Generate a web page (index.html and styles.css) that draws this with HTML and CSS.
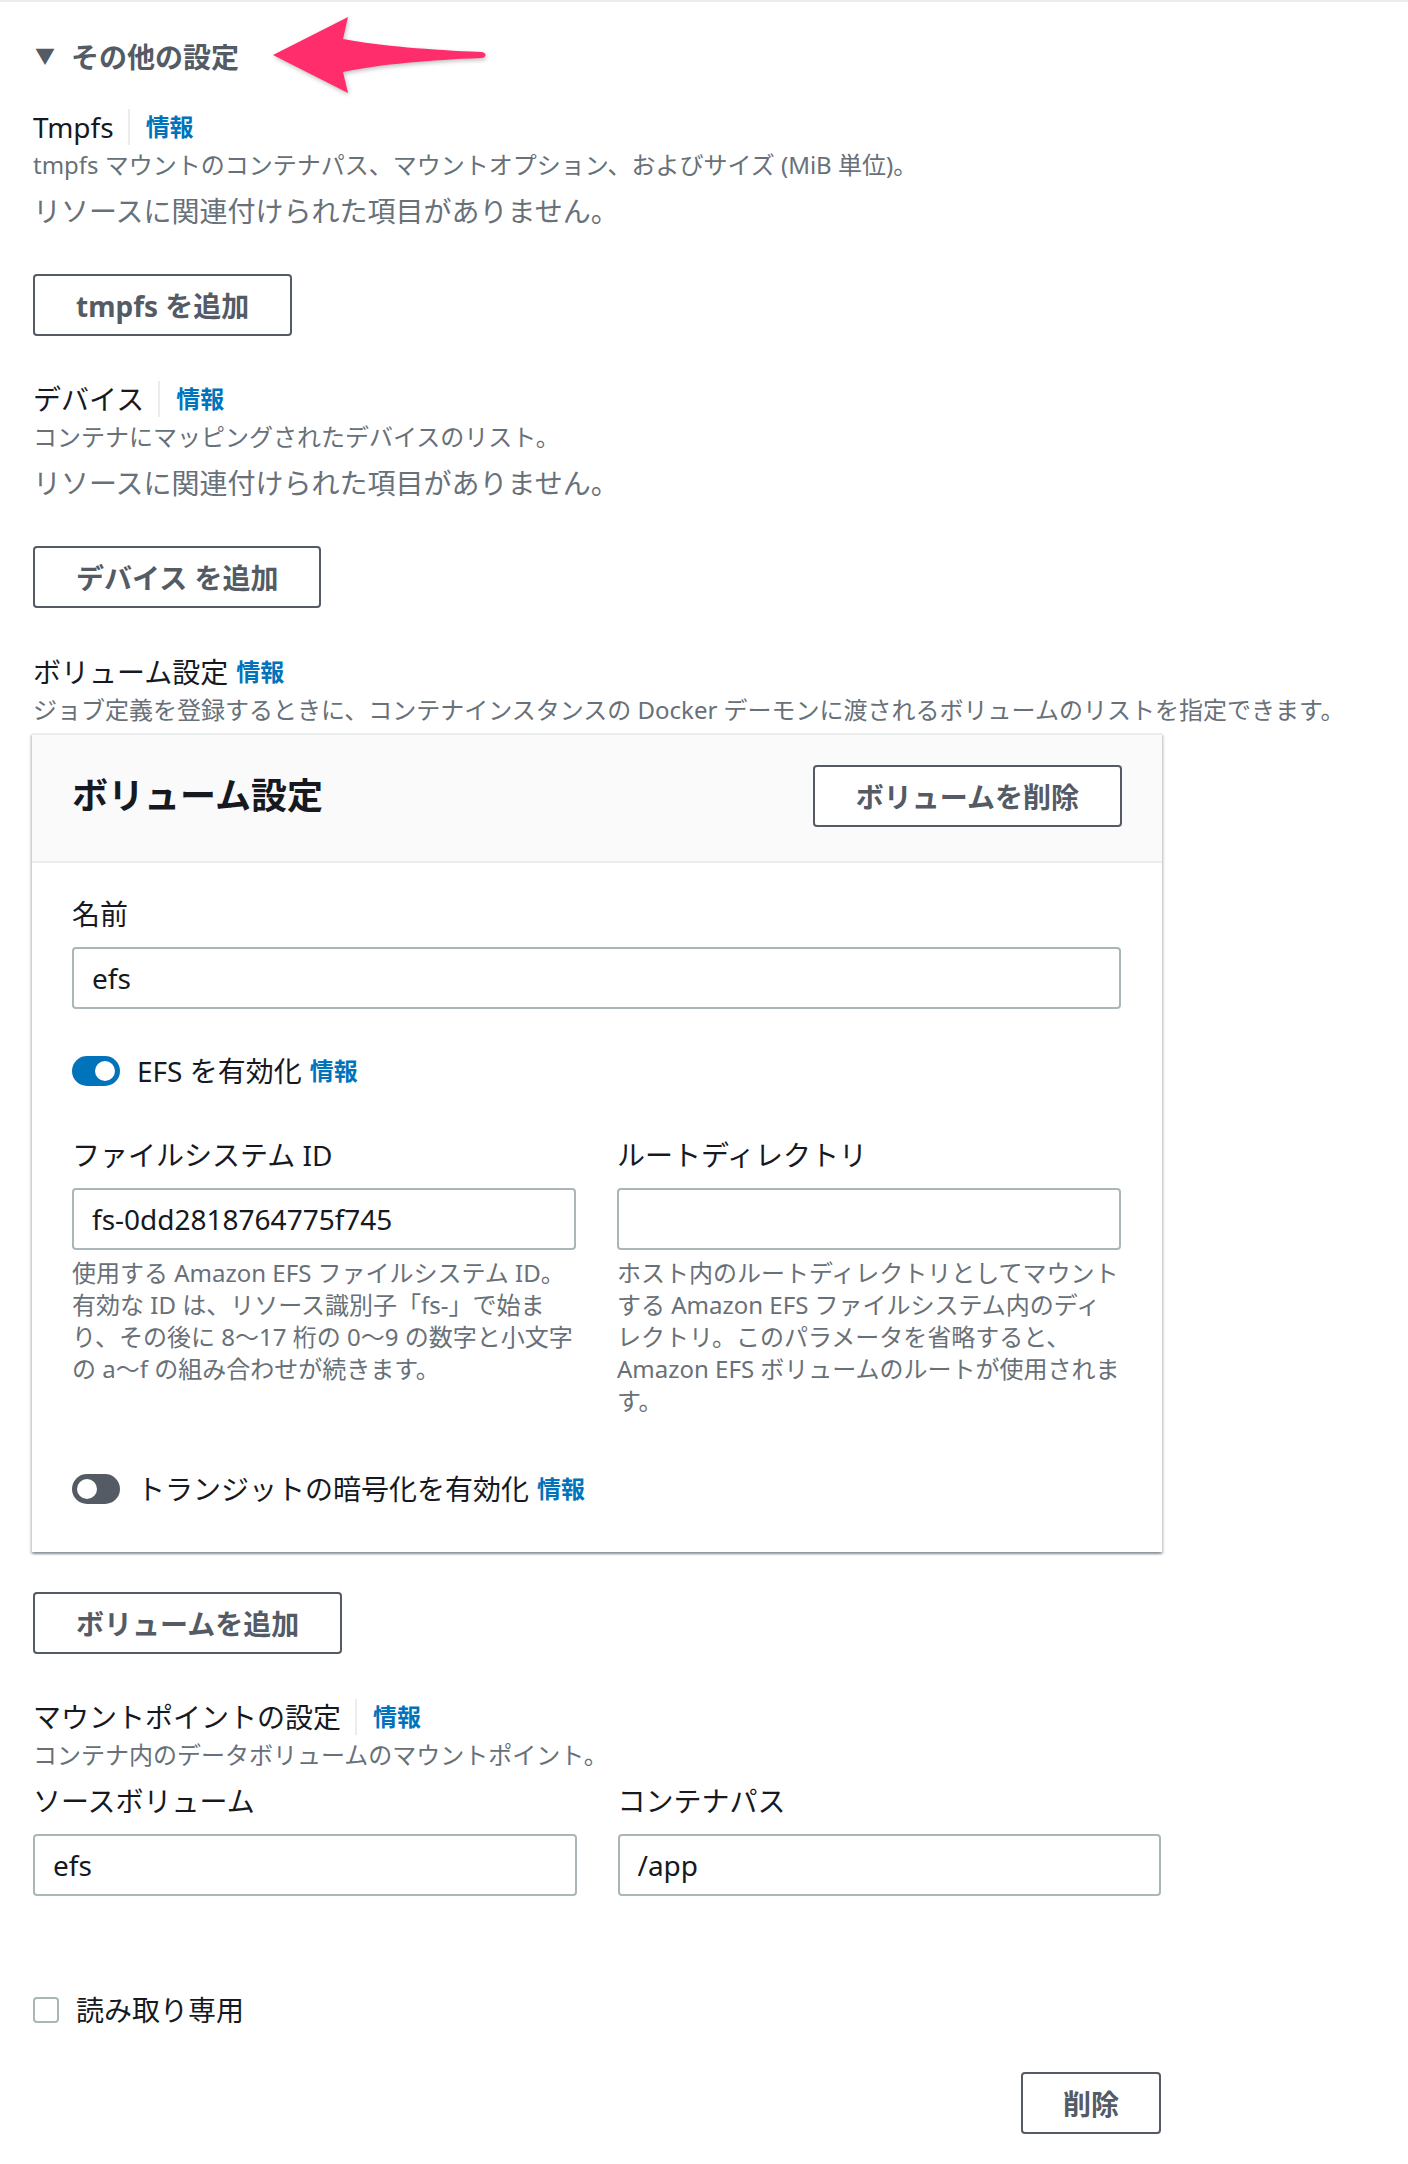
FILE: index.html
```html
<!DOCTYPE html>
<html lang="ja">
<head>
  <meta charset="UTF-8" />
  <meta name="viewport" content="width=device-width, initial-scale=1.0" />
  <title>その他の設定</title>
  <link rel="stylesheet" href="styles.css">
</head>
<body>
  <div class="page">
    <div class="expander">
      <span class="caret">▼</span>
      <span class="expander-title">その他の設定</span>
      <svg class="arrow" width="230" height="90" viewBox="0 0 230 90">
        <path d="M2 45 L77 7 L72 29 C110 36 160 40 210 42 C216 42 216 48 210 48 C160 50 110 54 72 62 L77 83 Z" fill="#ff2d6c" />
      </svg>
    </div>

    <div class="field-head">
      <span class="label">Tmpfs</span>
      <span class="sep"></span>
      <a class="info">情報</a>
    </div>
    <div class="desc">tmpfs マウントのコンテナパス、マウントオプション、およびサイズ (MiB 単位)。</div>
    <div class="empty">リソースに関連付けられた項目がありません。</div>
    <button class="btn btn-block">tmpfs を追加</button>

    <div class="field-head gap">
      <span class="label">デバイス</span>
      <span class="sep"></span>
      <a class="info">情報</a>
    </div>
    <div class="desc">コンテナにマッピングされたデバイスのリスト。</div>
    <div class="empty">リソースに関連付けられた項目がありません。</div>
    <button class="btn btn-block">デバイス を追加</button>

    <div class="field-head gap volumes-head">
      <span class="label">ボリューム設定</span>
      <a class="info info-near">情報</a>
    </div>
    <div class="desc nowrap">ジョブ定義を登録するときに、コンテナインスタンスの Docker デーモンに渡されるボリュームのリストを指定できます。</div>

    <div class="container">
      <div class="container-header">
        <h2>ボリューム設定</h2>
        <button class="btn">ボリュームを削除</button>
      </div>
      <div class="container-body">
        <div class="label">名前</div>
        <input class="input" type="text" value="efs">

        <div class="toggle-row">
          <span class="toggle on"></span>
          <span class="label">EFS を有効化</span>
          <a class="info info-near">情報</a>
        </div>

        <div class="cols">
          <div>
            <div class="label">ファイルシステム ID</div>
            <input class="input" type="text" value="fs-0dd2818764775f745">
            <div class="hint">使用する Amazon EFS ファイルシステム ID。有効な ID は、リソース識別子「fs-」で始まり、その後に 8～17 桁の 0～9 の数字と小文字の a～f の組み合わせが続きます。</div>
          </div>
          <div>
            <div class="label">ルートディレクトリ</div>
            <input class="input" type="text" value="">
            <div class="hint">ホスト内のルートディレクトリとしてマウントする Amazon EFS ファイルシステム内のディレクトリ。このパラメータを省略すると、Amazon EFS ボリュームのルートが使用されます。</div>
          </div>
        </div>

        <div class="toggle-row transit">
          <span class="toggle"></span>
          <span class="label">トランジットの暗号化を有効化</span>
          <a class="info info-near">情報</a>
        </div>
      </div>
    </div>

    <button class="btn btn-block add-volume">ボリュームを追加</button>

    <div class="field-head gap">
      <span class="label">マウントポイントの設定</span>
      <span class="sep"></span>
      <a class="info">情報</a>
    </div>
    <div class="desc">コンテナ内のデータボリュームのマウントポイント。</div>

    <div class="cols mount">
      <div>
        <div class="label">ソースボリューム</div>
        <input class="input" type="text" value="efs">
      </div>
      <div>
        <div class="label">コンテナパス</div>
        <input class="input" type="text" value="/app">
      </div>
    </div>

    <label class="check-row">
      <span class="checkbox"></span>
      <span class="label">読み取り専用</span>
    </label>

    <div class="actions">
      <button class="btn">削除</button>
    </div>
  </div>
</body>
</html>
```

FILE: styles.css
```css
body {
  margin: 0;
  background: white;
  font-family: "Noto Sans", "Noto Sans CJK JP", sans-serif;
  color: #16191f;
  font-size: 28px;
  line-height: 40px;
  border-top: 2px solid #eaeded;
}
.page {
  width: 1128px;
  padding: 35px 0 40px 33px;
}
.expander {
  position: relative;
  display: flex;
  align-items: center;
  height: 40px;
  color: #545b64;
  font-weight: bold;
}
.caret {
  font-size: 20px;
  margin: 0 16px 0 2px;
}
.expander-title {
  font-size: 28px;
}
.arrow {
  position: absolute;
  left: 238px;
  top: -27px;
  filter: drop-shadow(1px 2px 2px rgba(0, 0, 0, 0.25));
}
.field-head {
  display: flex;
  align-items: center;
  height: 40px;
  margin-top: 30px;
}
.field-head.gap {
  margin-top: 43px;
}
.field-head.volumes-head {
  margin-top: 44px;
}
.label {
  font-size: 28px;
  line-height: 40px;
  color: #16191f;
}
.sep {
  width: 2px;
  height: 36px;
  background: #eaeded;
  margin: 0 16px 0 14px;
}
.info {
  color: #0073bb;
  font-weight: bold;
  font-size: 24px;
}
.info-near {
  margin-left: 8px;
}
.desc {
  font-size: 24px;
  line-height: 32px;
  color: #687078;
  margin-top: 2px;
}
.nowrap {
  white-space: nowrap;
}
.empty {
  font-size: 28px;
  line-height: 40px;
  color: #687078;
  margin-top: 10px;
}
.btn {
  font-family: inherit;
  font-size: 28px;
  font-weight: bold;
  color: #545b64;
  background: white;
  border: 2px solid #545b64;
  border-radius: 4px;
  height: 62px;
  padding: 0 41px;
}
.btn-block {
  display: block;
  margin-top: 43px;
}
.container {
  margin-top: 7px;
  width: 1130px;
  margin-left: -1px;
  border-top: 2px solid #eaeded;
  box-shadow: 0 2px 2px 0 rgba(0, 28, 36, 0.3), 2px 2px 2px 0 rgba(0, 28, 36, 0.12), -2px 2px 2px 0 rgba(0, 28, 36, 0.12);
}
.container-header {
  display: flex;
  justify-content: space-between;
  align-items: center;
  background: #fafafa;
  padding: 30px 40px 34px 40px;
  border-bottom: 2px solid #eaeded;
}
.container-header h2 {
  margin: 0;
  font-size: 36px;
  font-weight: bold;
  color: #16191f;
}
.container-body {
  padding: 31px 41px 43px 40px;
}
.input {
  display: block;
  box-sizing: border-box;
  width: 100%;
  height: 62px;
  margin-top: 13px;
  border: 2px solid #aab7b8;
  border-radius: 4px;
  padding: 0 18px;
  font-family: inherit;
  font-size: 28px;
  color: #16191f;
}
.toggle-row {
  display: flex;
  align-items: center;
  height: 40px;
  margin-top: 42px;
}
.toggle {
  position: relative;
  width: 48px;
  height: 30px;
  border-radius: 15px;
  background: #545b64;
  margin-right: 17px;
}
.toggle::after {
  content: "";
  position: absolute;
  top: 5px;
  left: 5px;
  width: 20px;
  height: 20px;
  border-radius: 50%;
  background: white;
}
.toggle.on {
  background: #0073bb;
}
.toggle.on::after {
  left: 23px;
}
.cols {
  display: grid;
  grid-template-columns: 1fr 1fr;
  column-gap: 41px;
  margin-top: 44px;
}
.hint {
  font-size: 24px;
  line-height: 32px;
  color: #687078;
  margin-top: 7px;
}
.toggle-row.transit {
  margin-top: 52px;
}
.add-volume {
  margin-top: 40px;
}
.cols.mount {
  margin-top: 10px;
}
.check-row {
  display: flex;
  align-items: center;
  height: 40px;
  margin-top: 94px;
}
.checkbox {
  box-sizing: border-box;
  width: 26px;
  height: 26px;
  border: 2px solid #aab7b8;
  border-radius: 4px;
  margin-right: 17px;
}
.actions {
  display: flex;
  justify-content: flex-end;
  margin-top: 42px;
}
.actions .btn {
  padding: 0 40px;
}
```
